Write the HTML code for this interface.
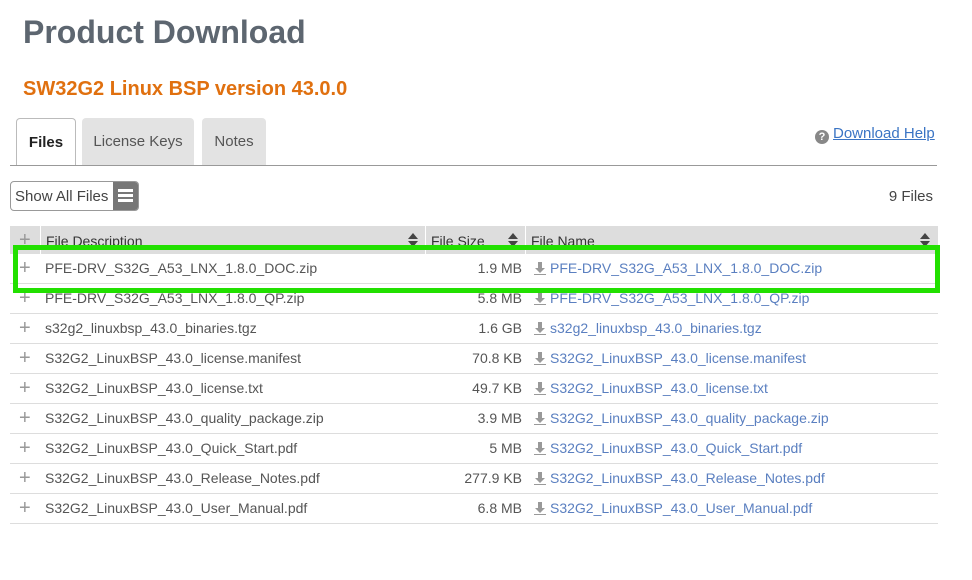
<!DOCTYPE html>
<html><head><style>
body{margin:0;background:#fff;font-family:"Liberation Sans",Arial,sans-serif;color:#555;width:972px;height:580px;position:relative;overflow:hidden}
.a{position:absolute}
h1{position:absolute;left:23px;top:14px;margin:0;font-size:32px;color:#5d6670;font-weight:bold}
h2{position:absolute;left:23px;top:78px;margin:0;font-size:20px;color:#e0700f;font-weight:bold}
.tab{position:absolute;top:118px;height:47px;background:#e3e3e3;border-radius:4px 4px 0 0;font-size:15px;line-height:47px;text-align:center;color:#555}
.row{position:absolute;left:10px;width:928px;height:29px;border-bottom:1px solid #ddd;font-size:14px;line-height:29px}
.row span{position:absolute}
.p{left:9px;color:#999;font-size:20px;font-weight:300}
.d{left:35px;color:#555}
.s{right:416px;color:#555}
.n{left:540px;color:#5a7fc0}
.dl{position:absolute;left:524px;top:8px;width:12px;height:13px}
.srt{position:absolute;top:6px;width:10px;height:16px}
</style></head><body>
<h1>Product Download</h1>
<h2>SW32G2 Linux BSP version 43.0.0</h2>
<div class="tab" style="left:16px;width:58px;background:#fff;border:1px solid #bbb;border-bottom:none;height:47px;font-weight:bold;color:#222">Files</div>
<div class="tab" style="left:82px;width:112px">License Keys</div>
<div class="tab" style="left:202px;width:64px">Notes</div>
<div class="a" style="left:10px;top:165px;width:927px;height:1px;background:#999"></div>
<div class="a" style="left:815px;top:125px;font-size:15px;color:#3a74c4;text-decoration:underline"><span style="display:inline-block;width:14px;height:14px;border-radius:50%;background:#888;color:#fff;font-size:11px;line-height:14px;text-align:center;font-weight:bold;text-decoration:none;vertical-align:-2px;margin-right:4px">?</span>Download Help</div>
<div class="a" style="left:10px;top:181px;width:127px;height:28px;border:1px solid #999;border-radius:4px;overflow:hidden;font-size:15px;line-height:29px">
<span style="padding-left:4px;color:#444">Show All Files</span>
<div class="a" style="right:0;top:0;width:25px;height:28px;background:#777"><div class="a" style="left:5px;top:7px;width:15px;height:3px;background:#fff;box-shadow:0 5px 0 #fff,0 10px 0 #fff"></div></div>
</div>
<div class="a" style="right:39px;top:188px;font-size:15px;color:#444">9 Files</div>
<div class="a" style="left:10px;top:226px;width:928px;height:28px;background:#ddd;font-size:14px;line-height:28px;color:#333">
<span class="a" style="left:9px;top:0;color:#999;font-size:20px">+</span>
<div class="a" style="left:30px;top:0;width:1px;height:28px;background:#fff"></div>
<span class="a" style="left:36px;top:1px">File Description</span>
<svg class="srt" style="left:398px" viewBox="0 0 10 16"><path d="M5 1l5 6H0z M0 9h10l-5 6z" fill="#444"/></svg>
<div class="a" style="left:415px;top:0;width:1px;height:28px;background:#fff"></div>
<span class="a" style="left:421px;top:1px">File Size</span>
<svg class="srt" style="left:498px" viewBox="0 0 10 16"><path d="M5 1l5 6H0z M0 9h10l-5 6z" fill="#444"/></svg>
<div class="a" style="left:515px;top:0;width:1px;height:28px;background:#fff"></div>
<span class="a" style="left:521px;top:1px">File Name</span>
<svg class="srt" style="left:910px" viewBox="0 0 10 16"><path d="M5 1l5 6H0z M0 9h10l-5 6z" fill="#444"/></svg>
</div>
<div class="row" style="top:254px"><span class="p">+</span><span class="d">PFE-DRV_S32G_A53_LNX_1.8.0_DOC.zip</span><span class="s">1.9 MB</span><svg class="dl" viewBox="0 0 12 13"><path d="M4 0h4v6h3l-5 5-5-5h3z M0 12h12v1H0z" fill="#999"/></svg><span class="n">PFE-DRV_S32G_A53_LNX_1.8.0_DOC.zip</span></div>
<div class="row" style="top:284px"><span class="p">+</span><span class="d">PFE-DRV_S32G_A53_LNX_1.8.0_QP.zip</span><span class="s">5.8 MB</span><svg class="dl" viewBox="0 0 12 13"><path d="M4 0h4v6h3l-5 5-5-5h3z M0 12h12v1H0z" fill="#999"/></svg><span class="n">PFE-DRV_S32G_A53_LNX_1.8.0_QP.zip</span></div>
<div class="row" style="top:314px"><span class="p">+</span><span class="d">s32g2_linuxbsp_43.0_binaries.tgz</span><span class="s">1.6 GB</span><svg class="dl" viewBox="0 0 12 13"><path d="M4 0h4v6h3l-5 5-5-5h3z M0 12h12v1H0z" fill="#999"/></svg><span class="n">s32g2_linuxbsp_43.0_binaries.tgz</span></div>
<div class="row" style="top:344px"><span class="p">+</span><span class="d">S32G2_LinuxBSP_43.0_license.manifest</span><span class="s">70.8 KB</span><svg class="dl" viewBox="0 0 12 13"><path d="M4 0h4v6h3l-5 5-5-5h3z M0 12h12v1H0z" fill="#999"/></svg><span class="n">S32G2_LinuxBSP_43.0_license.manifest</span></div>
<div class="row" style="top:374px"><span class="p">+</span><span class="d">S32G2_LinuxBSP_43.0_license.txt</span><span class="s">49.7 KB</span><svg class="dl" viewBox="0 0 12 13"><path d="M4 0h4v6h3l-5 5-5-5h3z M0 12h12v1H0z" fill="#999"/></svg><span class="n">S32G2_LinuxBSP_43.0_license.txt</span></div>
<div class="row" style="top:404px"><span class="p">+</span><span class="d">S32G2_LinuxBSP_43.0_quality_package.zip</span><span class="s">3.9 MB</span><svg class="dl" viewBox="0 0 12 13"><path d="M4 0h4v6h3l-5 5-5-5h3z M0 12h12v1H0z" fill="#999"/></svg><span class="n">S32G2_LinuxBSP_43.0_quality_package.zip</span></div>
<div class="row" style="top:434px"><span class="p">+</span><span class="d">S32G2_LinuxBSP_43.0_Quick_Start.pdf</span><span class="s">5 MB</span><svg class="dl" viewBox="0 0 12 13"><path d="M4 0h4v6h3l-5 5-5-5h3z M0 12h12v1H0z" fill="#999"/></svg><span class="n">S32G2_LinuxBSP_43.0_Quick_Start.pdf</span></div>
<div class="row" style="top:464px"><span class="p">+</span><span class="d">S32G2_LinuxBSP_43.0_Release_Notes.pdf</span><span class="s">277.9 KB</span><svg class="dl" viewBox="0 0 12 13"><path d="M4 0h4v6h3l-5 5-5-5h3z M0 12h12v1H0z" fill="#999"/></svg><span class="n">S32G2_LinuxBSP_43.0_Release_Notes.pdf</span></div>
<div class="row" style="top:494px"><span class="p">+</span><span class="d">S32G2_LinuxBSP_43.0_User_Manual.pdf</span><span class="s">6.8 MB</span><svg class="dl" viewBox="0 0 12 13"><path d="M4 0h4v6h3l-5 5-5-5h3z M0 12h12v1H0z" fill="#999"/></svg><span class="n">S32G2_LinuxBSP_43.0_User_Manual.pdf</span></div>
<div class="a" style="left:13px;top:245px;width:917px;height:38px;border:5px solid #22e000"></div>
</body></html>
